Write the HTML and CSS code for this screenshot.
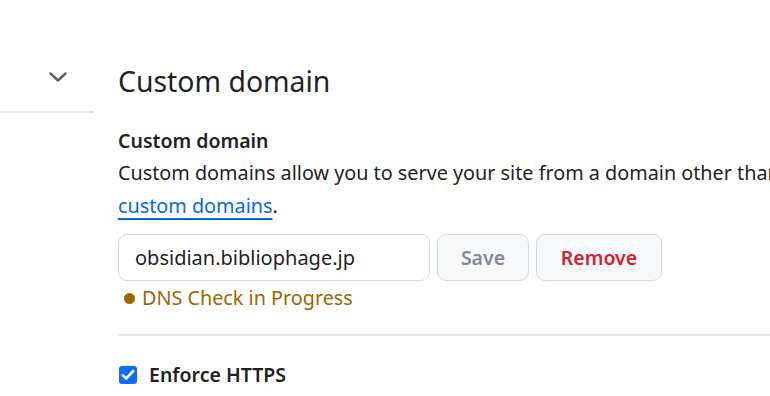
FILE: index.html
```html
<!DOCTYPE html>
<html>
<head>
<meta charset="utf-8">
<link rel="stylesheet" href="styles.css">
</head>
<body>
<div class="page">
  <aside class="sidebar">
    <div class="side-item">
      <svg class="chev" width="18" height="10" viewBox="0 0 18 10"><path d="M1.5 1.5 L9 8.5 L16.5 1.5" fill="none" stroke="#59636e" stroke-width="2.4" stroke-linecap="round" stroke-linejoin="round"/></svg>
    </div>
  </aside>
  <main class="main">
    <h2 class="title">Custom domain</h2>
    <div class="group">
      <div class="label">Custom domain</div>
      <p class="desc">Custom domains allow you to serve your site from a domain other than the default. Learn more about<br><a class="link" href="#">custom domains</a>.</p>
      <div class="row">
        <div class="input">obsidian.bibliophage.jp</div>
        <button class="btn btn-save">Save</button>
        <button class="btn btn-remove">Remove</button>
      </div>
      <div class="status"><span class="dot"></span>DNS Check in Progress</div>
    </div>
    <hr class="sep">
    <label class="check">
      <span class="box"><svg width="14" height="12" viewBox="0 0 14 12"><path d="M1.8 6.3 L5.2 9.6 L12.2 2" fill="none" stroke="#fff" stroke-width="2.6" stroke-linecap="round" stroke-linejoin="round"/></svg></span>
      <span class="check-label">Enforce HTTPS</span>
    </label>
  </main>
</div>
</body>
</html>
```
FILE: styles.css
```css
html, body {
  margin: 0;
  padding: 0;
  background: #ffffff;
}
body {
  font-family: "Noto Sans", "Open Sans", sans-serif;
  color: #1f2328;
  overflow: hidden;
  width: 770px;
  height: 396px;
}
.page {
  display: flex;
  width: 770px;
  overflow: hidden;
}
.sidebar {
  width: 94px;
  flex: none;
  padding-top: 42px;
}
.side-item {
  height: 71px;
  border-bottom: 2px solid #e6e8eb;
  display: flex;
  justify-content: flex-end;
  align-items: flex-start;
  padding-right: 27px;
  box-sizing: border-box;
}
.chev {
  margin-top: 30px;
}
.main {
  flex: 1;
  padding-left: 24px;
  padding-top: 56px;
  min-width: 0;
  overflow: hidden;
}
.title {
  margin: 0;
  font-size: 28.4px;
  font-weight: 400;
  line-height: 50px;
  white-space: nowrap;
}
.group {
  margin-top: 20px;
}
.label {
  font-size: 19.5px;
  font-weight: 600;
  line-height: 30px;
  white-space: nowrap;
}
.desc {
  margin: 0;
  font-size: 19.8px;
  line-height: 33px;
  white-space: nowrap;
}
.link {
  color: #0969da;
  text-decoration: underline;
  text-underline-offset: 5px;
  text-decoration-thickness: 2px;
}
.row {
  display: flex;
  gap: 7px;
  margin-top: 12px;
}
.input {
  width: 312px;
  height: 47px;
  box-sizing: border-box;
  border: 1px solid #d1d9e0;
  border-radius: 9px;
  padding: 0 16px;
  display: flex;
  align-items: center;
  font-size: 20px;
  color: #1f2328;
}
.btn {
  height: 47px;
  box-sizing: border-box;
  border: 1px solid #d1d9e0;
  border-radius: 9px;
  background: #f6f8fa;
  font-family: inherit;
  font-size: 19.5px;
  font-weight: 600;
  padding: 0;
}
.btn-save {
  width: 92px;
  color: #818b98;
}
.btn-remove {
  width: 126px;
  color: #d1242f;
}
.status {
  display: flex;
  align-items: center;
  font-size: 19.8px;
  line-height: 34px;
  color: #9a6700;
}
.dot {
  width: 11px;
  height: 11px;
  border-radius: 50%;
  background: #9a6700;
  margin-left: 6px;
  margin-right: 7px;
}
.sep {
  border: 0;
  border-top: 2px solid #e6e8eb;
  margin: 19px 0 0 0;
}
.check {
  display: flex;
  align-items: center;
  margin-top: 24px;
}
.box {
  width: 18px;
  height: 18px;
  border-radius: 3px;
  background: #0b6df5;
  display: flex;
  align-items: center;
  justify-content: center;
  margin-left: 1px;
}
.check-label {
  margin-left: 12px;
  font-size: 19.5px;
  font-weight: 600;
  line-height: 30px;
}
```
